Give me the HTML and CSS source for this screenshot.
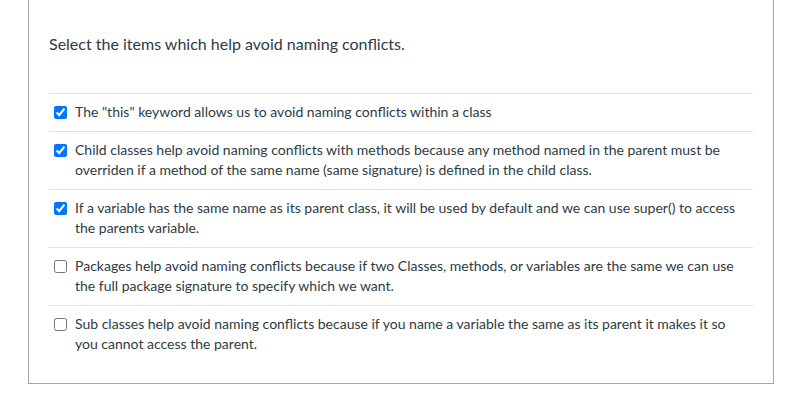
FILE: index.html
```html
<!DOCTYPE html>
<html>
<head>
	<meta charset="utf-8">
	<title>Question</title>
	<link rel="stylesheet" href="styles.css">
</head>
<body>
	<div class="question">
		<p class="question-text">Select the items which help avoid naming conflicts.</p>
		<div class="answers">
			<label class="answer"><input type="checkbox" checked><span>The "this" keyword allows us to avoid naming conflicts within a class</span></label>
			<label class="answer"><input type="checkbox" checked><span>Child classes help avoid naming conflicts with methods because any method named in the parent must be overriden if a method of the same name (same signature) is defined in the child class.</span></label>
			<label class="answer"><input type="checkbox" checked><span>If a variable has the same name as its parent class, it will be used by default and we can use super() to access the parents variable.</span></label>
			<label class="answer"><input type="checkbox"><span>Packages help avoid naming conflicts because if two Classes, methods, or variables are the same we can use the full package signature to specify which we want.</span></label>
			<label class="answer"><input type="checkbox"><span>Sub classes help avoid naming conflicts because if you name a variable the same as its parent it makes it so you cannot access the parent.</span></label>
		</div>
	</div>
</body>
</html>
```

FILE: styles.css
```css
body{margin: 0;background: #ffffff;font-family: Lato, "Open Sans", sans-serif;color: #2d3b45;}
.question{width: 704px;margin: 0 0 0 28px;border: 1px solid #a5a5a5;border-top: none;padding: 34px 20px 20px;}
.question-text{margin: 0 0 39px;font-size: 16px;line-height: 20px;}
.answer{display: flex;align-items: flex-start;border-top: 1px solid #e0e0e0;padding: 8px 12px 9px 0;font-size: 14px;line-height: 20px;}
.answer input{flex: none;margin: 4px 8px 0 5px;}
```
